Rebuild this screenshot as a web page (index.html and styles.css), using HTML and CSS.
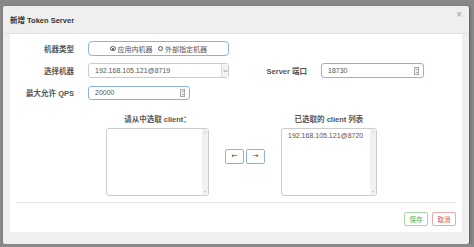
FILE: index.html
```html
<!DOCTYPE html>
<html lang="zh-CN">
<head>
    <meta charset="UTF-8">
    <title>新增 Token Server</title>
    <link rel="stylesheet" href="styles.css">
</head>
<body>

<div class="dialog">
    <div class="dialog-header">
        <span class="dialog-title">新增 Token Server</span>
        <span class="dialog-close">×</span>
    </div>

    <div class="dialog-body">
        <div class="form-grid">
            <label class="form-label">机器类型</label>
            <div class="radio-group focus">
                <span class="radio checked"></span><span class="radio-text">应用内机器</span>
                <span class="radio"></span><span class="radio-text">外部指定机器</span>
            </div>
            <span></span><span></span>

            <label class="form-label">选择机器</label>
            <div class="select-box">
                <span class="field-text">192.168.105.121@8719</span>
                <span class="select-arrow">
                    <svg width="5" height="4" viewBox="0 0 5 4"><path d="M0.5 1 L2.5 3 L4.5 1" fill="none" stroke="#777" stroke-width="0.8"/></svg>
                </span>
            </div>
            <label class="form-label">Server 端口</label>
            <div class="number-box focus">
                <span class="field-text">18730</span>
                <span class="spinner"><i class="up"></i><i class="down"></i></span>
            </div>

            <label class="form-label">最大允许 QPS</label>
            <div class="number-box focus qps">
                <span class="field-text">20000</span>
                <span class="spinner"><i class="up"></i><i class="down"></i></span>
            </div>
            <span></span><span></span>
        </div>

        <div class="transfer">
            <div class="transfer-col left-col">
                <div class="transfer-label">请从中选取 client：</div>
                <div class="list-box">
                    <div class="list-items"></div>
                    <div class="scroll"><i class="up"></i><i class="down"></i></div>
                </div>
            </div>
            <div class="transfer-buttons">
                <button class="arrow-btn">←</button>
                <button class="arrow-btn">→</button>
            </div>
            <div class="transfer-col right-col">
                <div class="transfer-label">已选取的 client 列表</div>
                <div class="list-box">
                    <div class="list-items">192.168.105.121@8720</div>
                    <div class="scroll"><i class="up"></i><i class="down"></i></div>
                </div>
            </div>
        </div>

        <div class="dialog-footer">
            <button class="btn btn-save">保存</button>
            <button class="btn btn-cancel">取消</button>
        </div>
    </div>
</div>

</body>
</html>
```

FILE: styles.css
```css
:root {
    --backdrop: #888888;
    --dialog-bg: #efefef;
    --body-bg: #ffffff;
    --text-color: #333333;
    --field-text: #555555;
    --border: #cccccc;
    --focus-border: #8ab4dc;
    --save-color: #4cae4c;
    --cancel-color: #d9534f;
}

* {
    box-sizing: border-box;
}

body {
    margin: 0;
    background-color: var(--backdrop);
    font-family: "Liberation Sans", "Noto Sans CJK SC", sans-serif;
    font-size: 7.5px;
    color: var(--text-color);
    overflow: hidden;
}

.dialog {
    margin: 6px 0 0 3px;
    width: 466px;
    height: 238px;
    background-color: var(--dialog-bg);
    border-radius: 2px;
    box-shadow: 1px 1px 3px rgba(0, 0, 0, 0.35);
}

.dialog-header {
    height: 28px;
    padding: 0 7px;
    display: flex;
    align-items: center;
    justify-content: space-between;
    border-bottom: 1px solid #e2e2e2;
}

.dialog-title {
    font-weight: bold;
    font-size: 7.5px;
    color: #333;
}

.dialog-close {
    font-size: 10px;
    color: #999;
    margin-top: -10px;
}

.dialog-body {
    margin: 0 7px;
    height: 198px;
    background-color: var(--body-bg);
    padding: 7px 6px 0 0;
}

.form-grid {
    display: grid;
    grid-template-columns: 64px 141px 64px 103px;
    grid-auto-rows: 15px;
    column-gap: 14px;
    row-gap: 7px;
    align-items: center;
}

.form-label {
    text-align: right;
    font-weight: bold;
    color: #555;
    white-space: nowrap;
}

.focus {
    border-color: var(--focus-border) !important;
}

.radio-group {
    height: 15px;
    border: 1px solid var(--border);
    border-radius: 4px;
    display: flex;
    align-items: center;
    justify-content: center;
    color: var(--field-text);
    font-size: 7px;
}

.radio {
    width: 5.5px;
    height: 5.5px;
    border: 0.8px solid #555;
    border-radius: 50%;
    margin-right: 2px;
    position: relative;
}

.radio.checked::after {
    content: "";
    position: absolute;
    left: 0.9px;
    top: 0.9px;
    width: 2.2px;
    height: 2.2px;
    border-radius: 50%;
    background-color: #333;
}

.radio-text {
    margin-right: 5px;
}

.radio-text:last-child {
    margin-right: 0;
}

.select-box,
.number-box {
    height: 15px;
    border: 1px solid var(--border);
    border-radius: 3px;
    display: flex;
    align-items: center;
    justify-content: space-between;
    padding-left: 6px;
}

.field-text {
    color: var(--field-text);
    font-size: 7px;
}

.select-arrow {
    width: 7px;
    height: 13px;
    border-left: 1px solid #ddd;
    background-color: #f3f3f3;
    display: flex;
    align-items: center;
    justify-content: center;
}

.number-box {
    padding-right: 4px;
}

.number-box.qps {
    width: 102px;
    height: 14px;
}

.spinner {
    width: 5px;
    height: 8px;
    border: 0.5px solid #aaa;
    background-color: #f2f2f2;
    display: flex;
    flex-direction: column;
    align-items: center;
    justify-content: space-around;
}

.spinner i,
.scroll i {
    width: 0;
    height: 0;
    border-left: 1.5px solid transparent;
    border-right: 1.5px solid transparent;
}

.spinner i.up,
.scroll i.up {
    border-bottom: 1.5px solid #666;
}

.spinner i.down,
.scroll i.down {
    border-top: 1.5px solid #666;
}

.transfer {
    display: flex;
    align-items: center;
    margin-top: 16px;
}

.transfer-col {
    display: flex;
    flex-direction: column;
    align-items: center;
}

.left-col {
    margin-left: 96px;
    width: 103px;
}

.right-col {
    margin-left: 16px;
    width: 96px;
}

.transfer-label {
    font-weight: bold;
    color: #555;
    height: 8px;
    line-height: 8px;
    margin-bottom: 4px;
}

.list-box {
    width: 100%;
    height: 68px;
    border: 1px solid var(--border);
    border-radius: 3px;
    display: flex;
}

.list-items {
    flex: 1;
    padding: 3px 6px;
    color: var(--field-text);
    font-size: 7px;
}

.scroll {
    width: 6px;
    background-color: #f1f1f1;
    display: flex;
    flex-direction: column;
    align-items: center;
    justify-content: space-between;
    padding: 3px 0;
}

.scroll i.up,
.scroll i.down {
    border-bottom-color: #aaa;
    border-top-color: #aaa;
}

.transfer-buttons {
    display: flex;
    gap: 2px;
    margin-left: 16px;
    margin-top: 0;
}

.arrow-btn {
    width: 19px;
    height: 15px;
    padding: 0;
    border: 1px solid var(--focus-border);
    border-radius: 2px;
    background-color: #fff;
    color: #333;
    font-family: "DejaVu Sans", sans-serif;
    font-size: 7px;
    line-height: 13px;
}

.dialog-footer {
    margin: 6px 0 0 6px;
    border-top: 1px solid #e5e5e5;
    padding-top: 9px;
    display: flex;
    justify-content: flex-end;
    gap: 4px;
}

.btn {
    width: 24px;
    height: 14px;
    padding: 0;
    background-color: #fff;
    border: 1px solid;
    border-radius: 2px;
    font-family: "Liberation Sans", "Noto Sans CJK SC", sans-serif;
    font-size: 6.5px;
}

.btn-save {
    color: var(--save-color);
    border-color: #a6d8a6;
}

.btn-cancel {
    color: var(--cancel-color);
    border-color: #eeaaaa;
}
```
